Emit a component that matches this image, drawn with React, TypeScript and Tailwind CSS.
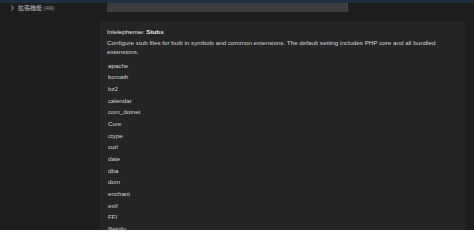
import React from 'react';

const STUBS = [
  'apache',
  'bcmath',
  'bz2',
  'calendar',
  'com_dotnet',
  'Core',
  'ctype',
  'curl',
  'date',
  'dba',
  'dom',
  'enchant',
  'exif',
  'FFI',
  'fileinfo',
];

const App: React.FC = () => {
  return (
    <div className="w-[474px] h-[230px] overflow-hidden bg-[#1e1e1e] border-t-[3px] border-[#1c2f43] flex font-['Liberation_Sans','Noto_Sans_CJK_JP',sans-serif]">
      <aside className="w-[100px] shrink-0 pt-[1px]">
        <div className="flex items-center h-[8px] pl-[10px] gap-[3px] text-[6px] text-[#bbbbbb]">
          <svg width="5" height="6" viewBox="0 0 5 6" fill="none">
            <path d="M1.2 0.8 L3.6 3 L1.2 5.2" stroke="#c5c5c5" strokeWidth="0.9" />
          </svg>
          <span>拡張機能 <span className="text-[#9a9a9a]">(49)</span></span>
        </div>
      </aside>

      <main className="flex-1 min-h-0 flex flex-col">
        <div className="shrink-0 ml-[7px] w-[241px] h-[9px] bg-[#3a3c3f] border-r border-[#4a4c4f]" />

        <section className="mt-[10px] mr-[9px] flex-1 min-h-0 overflow-hidden bg-[#252526] pl-[7px] pt-[5px] text-[6.25px] leading-[9.5px] text-[#d4d4d4]">
          <h3 className="text-[#e7e7e7]">
            Intelephense: <span className="font-bold">Stubs</span>
          </h3>
          <p className="mt-[1px] w-[340px]">
            Configure stub files for built in symbols and common extensions. The default setting includes PHP core and all bundled extensions.
          </p>

          <ul className="mt-[3px] flex flex-col">
            {STUBS.map(s => (
              <li key={s} className="shrink-0 h-[11.7px] leading-[11.7px] pl-[1px] text-[6.2px]">
                {s}
              </li>
            ))}
          </ul>
        </section>
      </main>
    </div>
  );
};

export default App;
